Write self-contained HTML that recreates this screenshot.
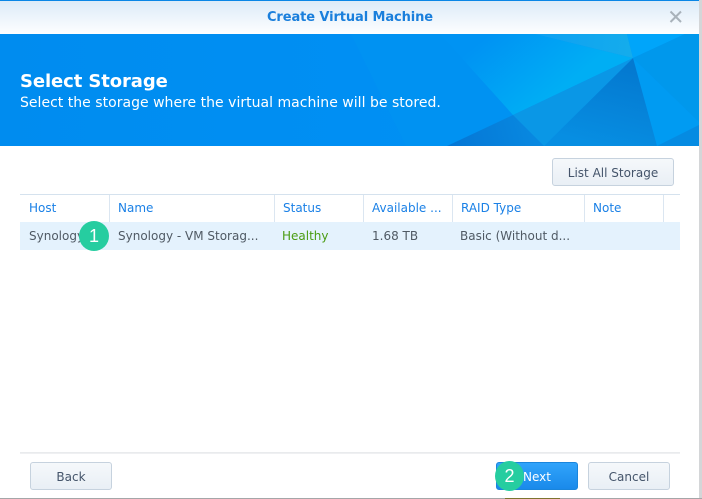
<!DOCTYPE html>
<html>
<head>
<meta charset="utf-8">
<style>
html,body{margin:0;padding:0;width:702px;height:499px;overflow:hidden;background:#fff;}
body{position:relative;font-family:"DejaVu Sans","Liberation Sans",sans-serif;font-size:12px;color:#505a64;}
div{position:absolute;box-sizing:border-box;white-space:nowrap;}
.hd{top:201px;color:#1a80e6;line-height:14px;}
.td{top:229px;line-height:14px;color:#505a64;}
.sep{top:195px;width:1px;height:27px;background:#dbe6f1;}
.btn{height:28px;border:1px solid #c6d2de;border-radius:3px;background:linear-gradient(#f5f8fb,#e9eff5);text-align:center;line-height:28px;color:#44546a;}
.num{border-radius:50%;background:#26cda0;color:#fff;text-align:center;font-family:"Liberation Sans",sans-serif;}
</style>
</head>
<body>
<div style="left:699px;top:0;width:3px;height:499px;background:#d4d6d8"></div>
<div style="left:0;top:0;width:699px;height:1px;background:#0a86e6"></div>
<div style="left:0;top:1px;width:699px;height:33px;background:linear-gradient(#dcebf8,#fdfeff)"></div>
<div style="left:0;top:7px;width:700px;text-align:center;font-weight:bold;font-size:13px;letter-spacing:-0.1px;line-height:22px;color:#1a7fdc">Create Virtual Machine</div>
<svg style="position:absolute;left:669px;top:10px" width="14" height="14" viewBox="0 0 14 14"><path d="M1.5 1.5L12 12M12 1.5L1.5 12" stroke="#a9b2ba" stroke-width="2" fill="none"/></svg>

<svg style="position:absolute;left:0;top:34px" width="699" height="112" viewBox="0 34 699 112">
<defs>
<linearGradient id="b" x1="0" y1="0" x2="1" y2="0"><stop offset="0" stop-color="#008cef"/><stop offset="0.5" stop-color="#008ff3"/><stop offset="1" stop-color="#0092f2"/></linearGradient>
<linearGradient id="c" gradientUnits="userSpaceOnUse" x1="480" y1="42" x2="535" y2="110"><stop offset="0" stop-color="#0093f3"/><stop offset="1" stop-color="#00aef4"/></linearGradient>
<linearGradient id="d" gradientUnits="userSpaceOnUse" x1="620" y1="65" x2="600" y2="146"><stop offset="0" stop-color="#0479d0"/><stop offset="1" stop-color="#078ee2"/></linearGradient>
<linearGradient id="e" gradientUnits="userSpaceOnUse" x1="440" y1="146" x2="530" y2="120"><stop offset="0" stop-color="#0474d4"/><stop offset="1" stop-color="#0888e0"/></linearGradient>
<linearGradient id="f" gradientUnits="userSpaceOnUse" x1="535" y1="40" x2="630" y2="50"><stop offset="0" stop-color="#0fa0f2"/><stop offset="1" stop-color="#14acec"/></linearGradient>
</defs>
<rect x="0" y="34" width="699" height="112" fill="url(#b)"/>
<polygon points="351,34 440,34 513,115 450,146 406,146" fill="#0092f2"/>
<polygon points="440,34 535,34 633,58 513,115" fill="url(#c)"/>
<polygon points="535,34 627,34 633,58" fill="url(#f)"/>
<polygon points="627,34 685,34 633,58" fill="#00a5fa"/>
<polygon points="685,34 699,34 699,122 633,58" fill="#0098ec"/>
<polygon points="633,58 699,122 699,125 657,146" fill="#009bf2"/>
<polygon points="657,146 699,125 699,146" fill="#058be2"/>
<polygon points="633,58 657,146 544,146" fill="url(#d)"/>
<polygon points="633,58 544,146 513,115" fill="#0a97e6"/>
<polygon points="513,115 544,146 447,146" fill="url(#e)"/>
</svg>

<div style="left:20px;top:71px;font-size:18px;font-weight:bold;letter-spacing:-0.1px;color:#fff;line-height:22px">Select Storage</div>
<div style="left:20px;top:94px;font-size:14px;letter-spacing:0.02px;color:#fff;line-height:18px">Select the storage where the virtual machine will be stored.</div>

<div class="btn" style="left:552px;top:158px;width:122px">List All Storage</div>

<div style="left:20px;top:194px;width:660px;height:1px;background:#d5e2ee"></div>
<div class="sep" style="left:109px"></div>
<div class="sep" style="left:274px"></div>
<div class="sep" style="left:363px"></div>
<div class="sep" style="left:452px"></div>
<div class="sep" style="left:584px"></div>
<div class="sep" style="left:663px"></div>
<div class="hd" style="left:29px">Host</div>
<div class="hd" style="left:118px">Name</div>
<div class="hd" style="left:283px">Status</div>
<div class="hd" style="left:372px">Available ...</div>
<div class="hd" style="left:461px">RAID Type</div>
<div class="hd" style="left:593px">Note</div>

<div style="left:20px;top:222px;width:660px;height:28px;background:#e4f2fd"></div>
<div class="td" style="left:29px">Synology</div>
<div class="td" style="left:118px">Synology - VM Storag...</div>
<div class="td" style="left:282px;color:#4a9c12">Healthy</div>
<div class="td" style="left:372px">1.68 TB</div>
<div class="td" style="left:460px">Basic (Without d...</div>

<div class="num" style="left:79px;top:221px;width:30px;height:30px;line-height:30px;font-size:18px">1</div>

<div style="left:20px;top:452px;width:660px;height:2px;background:linear-gradient(#e6e8ea,#f2f3f4)"></div>

<div class="btn" style="left:30px;top:462px;width:82px">Back</div>
<div class="btn" style="left:496px;top:462px;width:82px;border-color:#1a85dc;background:linear-gradient(#30a4fb,#1a8aea);color:#fff">Next</div>
<div class="btn" style="left:588px;top:462px;width:82px">Cancel</div>
<div class="num" style="left:495px;top:461px;width:29px;height:30px;line-height:30px;font-size:18px">2</div>

<div style="left:0;top:498px;width:702px;height:1px;background:#a4a6a8"></div>
<div style="left:505px;top:498px;width:55px;height:1px;background:#7c7430"></div>
</body>
</html>
